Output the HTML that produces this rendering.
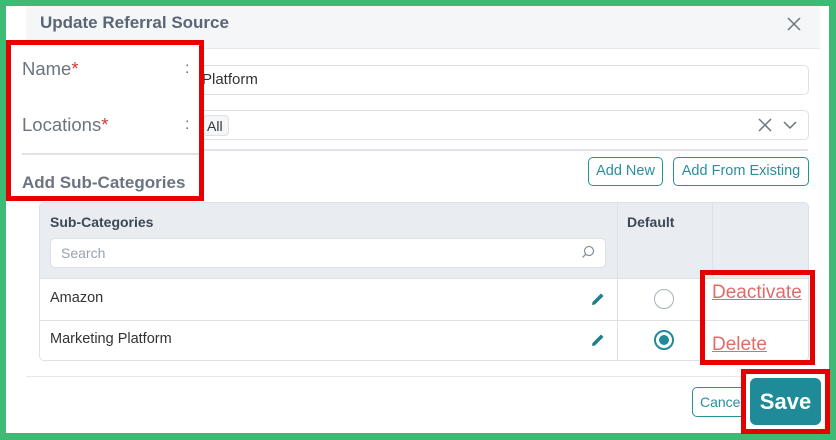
<!DOCTYPE html>
<html><head><style>
*{box-sizing:border-box;margin:0;padding:0}
body{width:836px;height:440px;overflow:hidden;background:#3fba74;font-family:"Liberation Sans",sans-serif;position:relative}
.a{position:absolute}
</style></head><body>
<div class="a" style="left:6px;top:6px;width:823px;height:427px;background:#fff"></div>
<div class="a" style="left:26px;top:6px;width:794px;height:43px;background:#f5f6f8;border-bottom:1px solid #e6e8ec"></div>
<div class="a" style="left:40px;top:13px;font-size:17px;font-weight:bold;color:#5b6675">Update Referral Source</div>
<svg class="a" style="left:787px;top:17px" width="14" height="14"><path d="M1 1L13 13M13 1L1 13" stroke="#6b7480" stroke-width="1.5"/></svg>
<div class="a" style="left:195px;top:65px;width:614px;height:30px;border:1px solid #dde1e6;border-radius:5px"></div>
<div class="a" style="left:202px;top:71px;font-size:15px;color:#333">Platform</div>
<div class="a" style="left:195px;top:110px;width:614px;height:30px;border:1px solid #dde1e6;border-radius:5px"></div>
<div class="a" style="left:203px;top:115px;height:21px;width:26px;border:1px solid #dde1e6;border-radius:4px;background:#f5f6f8;font-size:14px;color:#333;padding:2px 0 0 3px">All</div>
<svg class="a" style="left:758px;top:118px" width="14" height="14"><path d="M1 1L13 13M13 1L1 13" stroke="#6b7480" stroke-width="1.5"/></svg>
<svg class="a" style="left:783px;top:120px" width="14" height="10"><path d="M1 2L7 8L13 2" stroke="#6b7480" stroke-width="1.5" fill="none"/></svg>
<div class="a" style="left:22px;top:149px;width:786px;height:2px;background:#dfe2e6"></div>
<div class="a" style="left:588px;top:157px;width:75px;height:29px;border:1px solid #2a8f9c;border-radius:5px;color:#2a8f9c;font-size:14.5px;text-align:center;line-height:27px">Add New</div>
<div class="a" style="left:673px;top:157px;width:136px;height:29px;border:1px solid #2a8f9c;border-radius:5px;color:#2a8f9c;font-size:14.5px;text-align:center;line-height:27px">Add From Existing</div>
<div class="a" style="left:39px;top:202px;width:770px;height:159px;border:1px solid #dde1e6;border-radius:5px;overflow:hidden">
 <div class="a" style="left:0;top:0;width:770px;height:76px;background:#e9edf1;border-bottom:1px solid #dde1e6"></div>
 <div class="a" style="left:577px;top:0;width:1px;height:159px;background:#dde1e6"></div>
 <div class="a" style="left:672px;top:0;width:1px;height:76px;background:#dde1e6"></div>
 <div class="a" style="left:0;top:117px;width:770px;height:1px;background:#dde1e6"></div>
</div>
<div class="a" style="left:50px;top:214px;font-size:14px;font-weight:bold;color:#3c4655">Sub-Categories</div>
<div class="a" style="left:627px;top:214px;font-size:14px;font-weight:bold;color:#3c4655">Default</div>
<div class="a" style="left:50px;top:238px;width:556px;height:30px;background:#fff;border:1px solid #dde1e6;border-radius:5px;font-size:14px;color:#98a2b0;padding:6px 10px">Search</div>
<svg class="a" style="left:581px;top:245px" width="14" height="14"><circle cx="8" cy="6" r="4.5" stroke="#8a939f" stroke-width="1.3" fill="none"/><path d="M5 9L1.5 12.5" stroke="#8a939f" stroke-width="1.3"/></svg>
<div class="a" style="left:50px;top:290px;font-size:14.5px;color:#333">Amazon</div>
<div class="a" style="left:50px;top:331px;font-size:14.5px;color:#333">Marketing Platform</div>
<svg class="a" style="left:591px;top:292px" width="14" height="14"><path d="M1 13L1.5 10L10 1.5L12.5 4L4 12.5Z" fill="#1f7f8c"/></svg>
<svg class="a" style="left:591px;top:333px" width="14" height="14"><path d="M1 13L1.5 10L10 1.5L12.5 4L4 12.5Z" fill="#1f7f8c"/></svg>
<svg class="a" style="left:653px;top:288px" width="22" height="22"><circle cx="11" cy="11" r="9.5" stroke="#a8b0ba" stroke-width="1" fill="#fff"/></svg>
<svg class="a" style="left:653px;top:329px" width="22" height="22"><circle cx="11" cy="11" r="9" stroke="#1f8a98" stroke-width="2" fill="#fff"/><circle cx="11" cy="11" r="5" fill="#1f8a98"/></svg>
<div class="a" style="left:712px;top:282px;font-size:19px;color:#e06b6b;text-decoration:underline">Deactivate</div>
<div class="a" style="left:712px;top:334px;font-size:19px;color:#e06b6b;text-decoration:underline">Delete</div>
<div class="a" style="left:26px;top:376px;width:794px;height:1px;background:#e6e8ec"></div>
<div class="a" style="left:692px;top:387px;width:60px;height:30px;border:1px solid #2a8f9c;border-radius:5px;color:#2a8f9c;font-size:14px;line-height:28px;padding-left:7px;overflow:hidden">Cancel</div>
<div class="a" style="left:741px;top:369px;width:89px;height:65px;background:#fff;border:5px solid #e60000"></div>
<div class="a" style="left:750px;top:378px;width:71px;height:47px;background:#1f8a98;border-radius:6px;color:#fff;font-size:22px;font-weight:bold;text-align:center;line-height:47px">Save</div>
<div class="a" style="left:6px;top:40px;width:198px;height:161px;background:#fff;border:5px solid #e60000"></div>
<div class="a" style="left:22px;top:58px;font-size:18.5px;color:#6b7480">Name<span style="color:#d03a3a">*</span></div>
<div class="a" style="left:185px;top:60px;font-size:16px;color:#6b7480">:</div>
<div class="a" style="left:22px;top:114px;font-size:18.5px;color:#6b7480">Locations<span style="color:#d03a3a">*</span></div>
<div class="a" style="left:185px;top:116px;font-size:16px;color:#6b7480">:</div>
<div class="a" style="left:22px;top:153px;width:177px;height:2px;background:#dfe2e6"></div>
<div class="a" style="left:22px;top:173px;font-size:17px;font-weight:bold;color:#6b7480">Add Sub-Categories</div>
<div class="a" style="left:700px;top:270px;width:115px;height:95px;border:5px solid #e60000"></div>
</body></html>
